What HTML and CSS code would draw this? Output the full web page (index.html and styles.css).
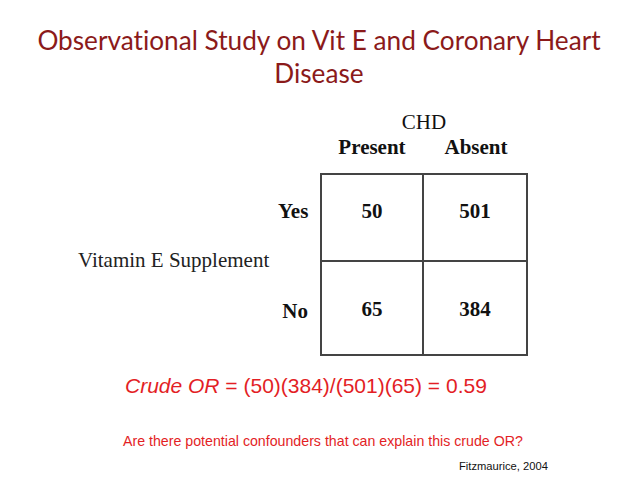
FILE: index.html
```html
<!DOCTYPE html>
<html>
<head>
<meta charset="utf-8">
<link rel="stylesheet" href="styles.css">
</head>
<body>
<div class="slide">
  <h1 class="title">Observational Study on Vit E and Coronary Heart<br>Disease</h1>
  <div class="figure">
    <div class="chd">CHD</div>
    <div class="colhead col-a">Present</div>
    <div class="colhead col-b">Absent</div>
    <div class="factor">Vitamin E Supplement</div>
    <div class="rowhead row-1">Yes</div>
    <div class="cell row-1 col-a c-tl">50</div>
    <div class="cell row-1 col-b c-tr">501</div>
    <div class="rowhead row-2 r2">No</div>
    <div class="cell row-2 col-a c-bl r2">65</div>
    <div class="cell row-2 col-b c-br r2">384</div>
  </div>
  <p class="formula"><em>Crude OR</em> = (50)(384)/(501)(65) = 0.59</p>
  <p class="question">Are there potential confounders that can explain this crude OR?</p>
  <p class="cite">Fitzmaurice, 2004</p>
</div>
</body>
</html>
```
FILE: styles.css
```css
html, body {
  margin: 0;
  padding: 0;
  background: #ffffff;
}

.slide {
  width: 638px;
  height: 478px;
  overflow: hidden;
}

.title {
  margin: 0;
  padding-top: 24px;
  text-align: center;
  font-family: Lato, "Open Sans", sans-serif;
  font-weight: 400;
  font-size: 26.2px;
  line-height: 33px;
  color: #8b1a1a;
  font-variant-ligatures: none;
}

.figure {
  display: grid;
  grid-template-columns: 200px 42px 104px 104px;
  grid-template-rows: 25px 38px 89px 94px;
  margin-left: 78px;
  margin-top: 20px;
  font-family: "Liberation Serif", "Times New Roman", serif;
  font-size: 21px;
  line-height: 24px;
  color: #111;
}

.chd {
  grid-column: 3 / 5;
  grid-row: 1;
  text-align: center;
}

.colhead {
  grid-row: 2;
  font-weight: 700;
  text-align: center;
}

.col-a { grid-column: 3; }
.col-b { grid-column: 4; }
.row-1 { grid-row: 3; }
.row-2 { grid-row: 4; }

.factor {
  grid-column: 1;
  grid-row: 3 / 5;
  align-self: start;
  padding-top: 75px;
  color: #222;
}

.rowhead {
  grid-column: 2;
  font-weight: 700;
  text-align: right;
  padding-right: 12px;
  padding-top: 26px;
}

.cell {
  font-weight: 700;
  text-align: center;
  padding-top: 24px;
  border: 0 solid #444;
}

.rowhead.r2 { padding-top: 37px; }
.cell.r2 { padding-top: 35px; }

.c-tl { border-width: 2px 2px 2px 2px; }
.c-tr { border-width: 2px 2px 2px 0; }
.c-bl { border-width: 0 2px 2px 2px; }
.c-br { border-width: 0 2px 2px 0; }

.formula {
  margin: 18px 0 0 125px;
  font-family: "Liberation Sans", Arial, sans-serif;
  font-size: 21px;
  line-height: 24px;
  color: #e31e25;
}

.question {
  margin: 35px 0 0 123px;
  font-family: "Liberation Sans", Arial, sans-serif;
  font-size: 14.2px;
  line-height: 16px;
  color: #e31e25;
}

.cite {
  margin: 10px 0 0 459px;
  font-family: "Liberation Sans", Arial, sans-serif;
  font-size: 11.2px;
  line-height: 14px;
  color: #111;
}
```
